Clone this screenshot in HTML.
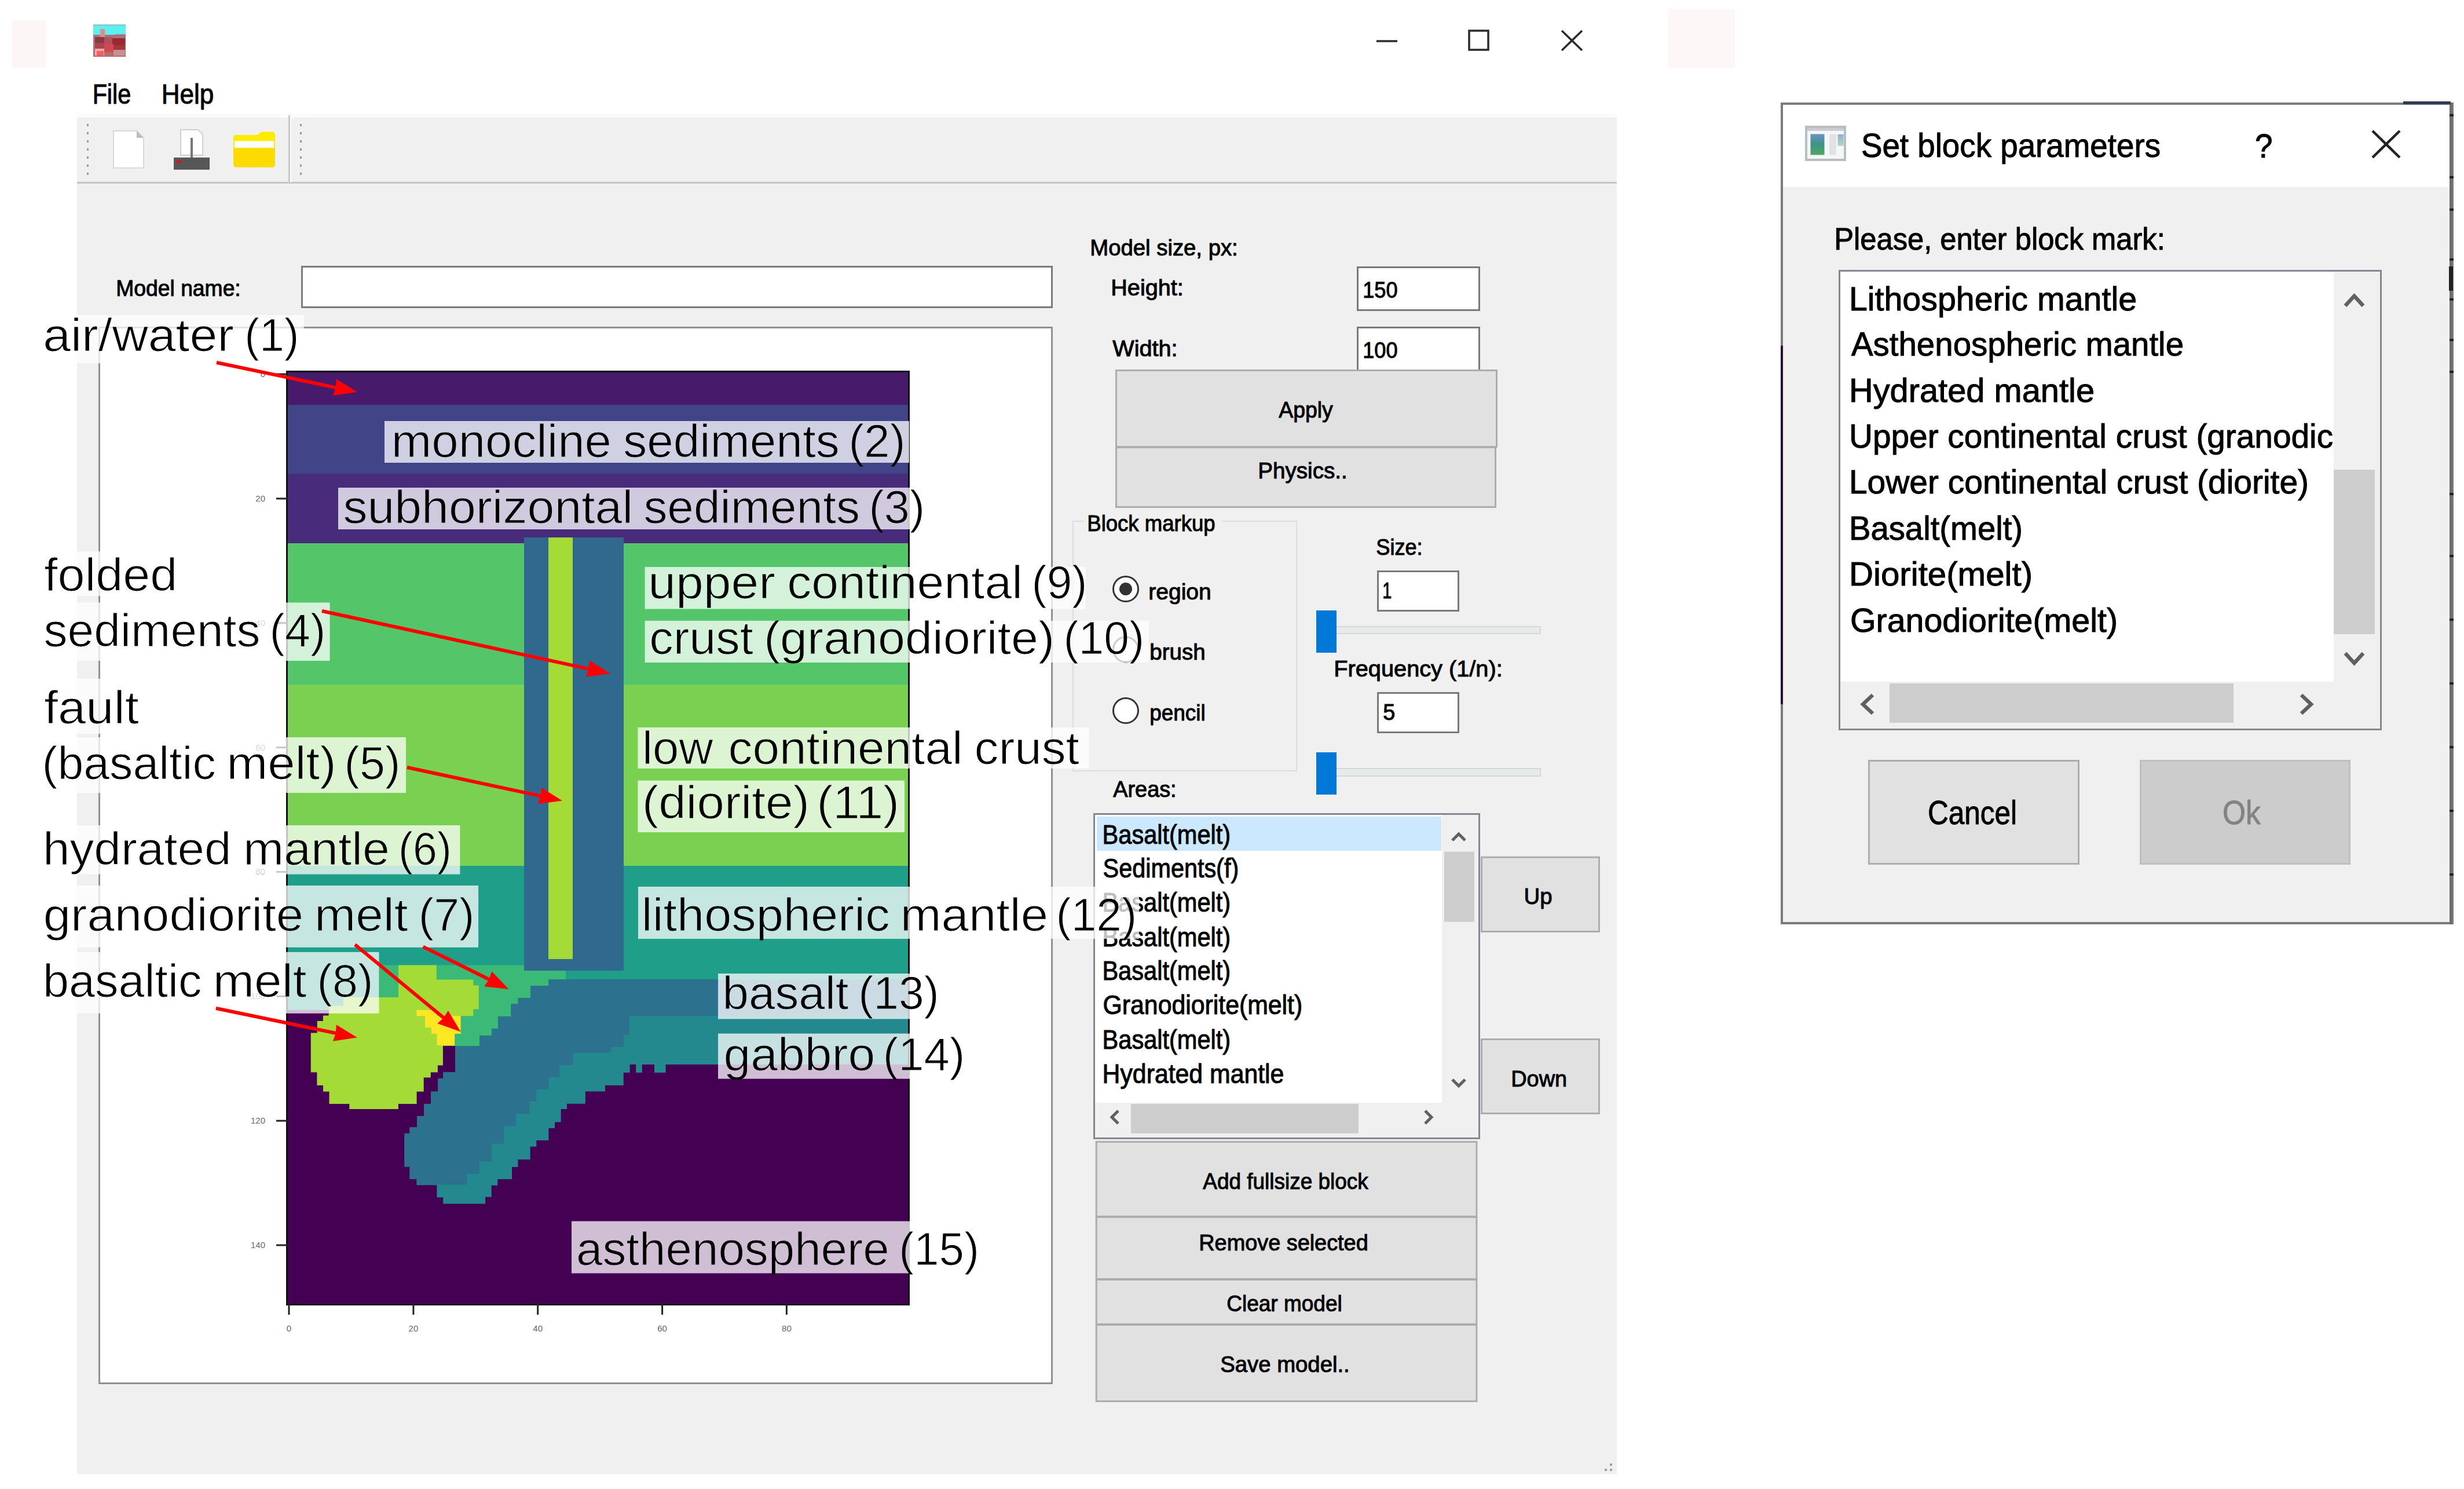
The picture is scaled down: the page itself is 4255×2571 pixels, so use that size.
<!DOCTYPE html><html><head><meta charset="utf-8"><title>GeoModel</title><style>
html,body{margin:0;padding:0;background:#fff;overflow:hidden;width:4255px;height:2571px}
svg{display:block;font-family:"Liberation Sans",sans-serif}
</style></head><body>
<svg width="4255" height="2571" viewBox="0 0 4255 2571">
<rect x="0" y="0" width="4255" height="2571" fill="#ffffff"/>
<rect x="21" y="35" width="58" height="82" fill="#fdf6f6"/>
<rect x="2881" y="15" width="115" height="103" fill="#fdf7f7"/>
<g>
<rect x="161" y="42" width="56" height="56" fill="#b86a72"/>
<rect x="161" y="42" width="56" height="18" fill="#5ef0ee"/>
<rect x="161" y="42" width="56" height="3" fill="#86d0d0"/>
<rect x="199" y="59" width="18" height="4" fill="#8a86dc"/>
<rect x="161" y="60" width="56" height="5" fill="#a8707a"/>
<rect x="173" y="50" width="8" height="15" fill="#e08a8a"/>
<rect x="164" y="64" width="16" height="10" fill="#8a3844"/>
<rect x="180" y="64" width="14" height="12" fill="#b05060"/>
<rect x="194" y="66" width="22" height="12" fill="#9a2830"/>
<rect x="164" y="74" width="16" height="10" fill="#a84450"/>
<rect x="180" y="76" width="16" height="14" fill="#d04850"/>
<rect x="196" y="78" width="20" height="8" fill="#a03838"/>
<rect x="164" y="84" width="16" height="12" fill="#f0a8a8"/>
<rect x="167" y="88" width="12" height="8" fill="#f06060"/>
<rect x="196" y="86" width="20" height="10" fill="#c89090"/>
<rect x="180" y="90" width="16" height="6" fill="#b07070"/>
</g>
<g stroke="#2b2b2b" stroke-width="3.5" fill="none">
<line x1="2377" y1="71" x2="2413" y2="71"/>
<rect x="2537" y="53" width="33" height="33"/>
<line x1="2697" y1="53" x2="2732" y2="87"/><line x1="2732" y1="53" x2="2697" y2="87"/>
</g>
<text x="159.64" y="179" font-size="48" fill="#000" textLength="66.57" lengthAdjust="spacingAndGlyphs" stroke="#000" stroke-width="1.0">File</text>
<text x="278.64" y="179" font-size="48" fill="#000" textLength="90.61" lengthAdjust="spacingAndGlyphs" stroke="#000" stroke-width="1.0">Help</text>
<rect x="133" y="196" width="2659" height="2349" fill="#f0f0f0"/>
<rect x="133" y="196" width="2659" height="7" fill="#fbfbfb"/>
<rect x="133" y="314" width="2659" height="3" fill="#c4c4c4"/>
<rect x="498" y="199" width="3" height="116" fill="#c8c8c8"/>
<rect x="501" y="199" width="2" height="116" fill="#ffffff"/>
<rect x="150" y="214" width="3" height="4" fill="#9a9a9a"/>
<rect x="150" y="228" width="3" height="4" fill="#9a9a9a"/>
<rect x="150" y="242" width="3" height="4" fill="#9a9a9a"/>
<rect x="150" y="256" width="3" height="4" fill="#9a9a9a"/>
<rect x="150" y="270" width="3" height="4" fill="#9a9a9a"/>
<rect x="150" y="284" width="3" height="4" fill="#9a9a9a"/>
<rect x="150" y="298" width="3" height="4" fill="#9a9a9a"/>
<rect x="518" y="214" width="3" height="4" fill="#9a9a9a"/>
<rect x="518" y="228" width="3" height="4" fill="#9a9a9a"/>
<rect x="518" y="242" width="3" height="4" fill="#9a9a9a"/>
<rect x="518" y="256" width="3" height="4" fill="#9a9a9a"/>
<rect x="518" y="270" width="3" height="4" fill="#9a9a9a"/>
<rect x="518" y="284" width="3" height="4" fill="#9a9a9a"/>
<rect x="518" y="298" width="3" height="4" fill="#9a9a9a"/>
<path d="M196 226 H236 L248 238 V290 H196 Z" fill="#ffffff" stroke="#d9d9d9" stroke-width="2"/>
<path d="M236 226 V238 H248 Z" fill="#bdbdbd"/>
<path d="M312 224 H342 L350 232 V268 H312 Z" fill="#ffffff" stroke="#d0d0d0" stroke-width="2"/>
<rect x="329" y="238" width="4" height="42" fill="#777777"/>
<rect x="300" y="272" width="62" height="21" fill="#575757"/>
<rect x="305" y="277" width="8" height="4" fill="#e01010"/>
<path d="M403 238 Q403 233 408 233 H445 L449 229 Q451 227.5 454 227.5 H470 Q475 227.5 475 233 V283 Q475 289 469 289 H409 Q403 289 403 283 Z" fill="#fdec00"/>
<rect x="405" y="243.5" width="68" height="12" fill="#ffffff"/>
<path d="M403 255.5 H475 V283 Q475 289 469 289 H409 Q403 289 403 283 Z" fill="#fcdc00"/>
<text x="200.27" y="511" font-size="39" fill="#000" textLength="215.46" lengthAdjust="spacingAndGlyphs" stroke="#000" stroke-width="1.0">Model name:</text>
<rect x="521.5" y="460.5" width="1295" height="70" fill="#ffffff" stroke="#7a7a7a" stroke-width="3"/>
<rect x="171.5" y="565.5" width="1645" height="1823" fill="#ffffff" stroke="#8d9299" stroke-width="3"/>
<rect x="497" y="643" width="1071" height="1608" fill="#440154"/>
<rect x="497" y="643" width="1071" height="57" fill="#481a6c"/>
<rect x="497" y="699" width="1071" height="119" fill="#414487"/>
<rect x="497" y="818" width="1071" height="120" fill="#482c7b"/>
<rect x="497" y="938" width="1071" height="244" fill="#54c568"/>
<rect x="497" y="1182" width="1071" height="313" fill="#7ad151"/>
<rect x="497" y="1495" width="1071" height="196" fill="#1f9e89"/>
<rect x="497" y="1690" width="160" height="54" fill="#1f9e89"/>
<polygon points="655.0,1666.5 905.0,1666.5 905.0,1676.0 977.0,1676.0 977.0,1691.0 947.7,1691.0 947.7,1702.0 916.0,1702.0 916.0,1723.0 894.8,1723.0 894.8,1733.7 882.7,1733.7 882.7,1755.0 860.0,1755.0 860.0,1776.0 849.5,1776.0 849.5,1788.0 828.0,1788.0 828.0,1806.0 655.0,1806.0" fill="#3bb977"/>
<polygon points="786.0,1806.0 786.0,1851.5 765.0,1851.5 765.0,1862.0 756.0,1862.0 756.0,1884.7 744.0,1884.7 744.0,1906.0 732.0,1906.0 732.0,1927.0 720.0,1927.0 720.0,1946.6 707.5,1946.6 707.5,1957.2 698.5,1957.2 698.5,2014.6 707.5,2014.6 707.5,2035.8 719.6,2035.8 719.6,2046.3 754.4,2046.3 754.4,2067.5 765.3,2067.5 765.3,2078.4 838.0,2078.4 838.0,2066.7 848.7,2066.7 848.7,2046.7 859.3,2046.7 859.3,2036.0 884.0,2036.0 884.0,2015.0 894.5,2015.0 894.5,2002.0 915.7,2002.0 915.7,1979.7 926.3,1979.7 926.3,1969.0 947.4,1969.0 947.4,1948.0 958.0,1948.0 958.0,1937.4 968.6,1937.4 968.6,1915.0 979.0,1915.0 979.0,1905.7 1010.9,1905.7 1010.9,1884.5 1045.0,1884.5 1045.0,1874.0 1076.7,1874.0 1076.7,1852.0 1087.6,1852.0 1087.6,1838.0 1098.2,1838.0 1098.2,1852.0 1108.8,1852.0 1108.8,1838.0 1130.0,1838.0 1130.0,1852.0 1149.5,1852.0 1149.5,1838.0 1568.0,1838.0 1568.0,1691.0 947.7,1691.0 947.7,1702.0 916.0,1702.0 916.0,1723.0 894.8,1723.0 894.8,1733.7 882.7,1733.7 882.7,1755.0 860.0,1755.0 860.0,1776.0 849.5,1776.0 849.5,1788.0 828.0,1788.0 828.0,1806.0" fill="#23898e"/>
<polygon points="786.0,1806.0 786.0,1851.5 765.0,1851.5 765.0,1862.0 756.0,1862.0 756.0,1884.7 744.0,1884.7 744.0,1906.0 732.0,1906.0 732.0,1927.0 720.0,1927.0 720.0,1946.6 707.5,1946.6 707.5,1957.2 698.5,1957.2 698.5,2014.6 707.5,2014.6 707.5,2035.8 719.6,2035.8 719.6,2045.5 806.4,2045.5 806.4,2026.7 827.6,2026.7 827.6,2005.6 848.7,2005.6 848.7,1975.0 869.9,1975.0 869.9,1944.5 891.0,1944.5 891.0,1923.0 914.5,1923.0 914.5,1902.0 926.3,1902.0 926.3,1881.0 947.4,1881.0 947.4,1860.0 966.2,1860.0 966.2,1838.7 989.7,1838.7 989.7,1817.6 1055.5,1817.6 1055.5,1808.0 1077.0,1808.0 1077.0,1787.0 1087.0,1787.0 1087.0,1754.0 1568.0,1754.0 1568.0,1691.0 947.7,1691.0 947.7,1702.0 916.0,1702.0 916.0,1723.0 894.8,1723.0 894.8,1733.7 882.7,1733.7 882.7,1755.0 860.0,1755.0 860.0,1776.0 849.5,1776.0 849.5,1788.0 828.0,1788.0 828.0,1806.0" fill="#2c728e"/>
<polygon points="688.0,1666.5 753.7,1666.5 753.7,1691.4 817.3,1691.4 817.3,1701.6 826.8,1701.6 826.8,1742.5 817.3,1742.5 817.3,1754.2 795.4,1754.2 795.4,1785.0 785.1,1785.0 785.1,1805.3 764.9,1805.3 764.9,1839.4 755.9,1839.4 755.9,1851.5 743.8,1851.5 743.8,1860.5 731.7,1860.5 731.7,1884.7 719.6,1884.7 719.6,1905.9 687.9,1905.9 687.9,1914.9 603.3,1914.9 603.3,1905.9 568.5,1905.9 568.5,1884.7 558.0,1884.7 558.0,1874.1 547.4,1874.1 547.4,1851.5 536.8,1851.5 536.8,1783.4 547.7,1783.4 547.7,1763.0 557.9,1763.0 557.9,1753.5 567.4,1753.5 568.9,1736.7 593.0,1736.7 593.0,1722.0 688.0,1722.0" fill="#a5db36"/>
<polygon points="719.4,1744.0 753.7,1744.0 753.7,1754.2 795.4,1754.2 795.4,1785.0 785.1,1785.0 785.1,1805.3 754.5,1805.3 754.5,1785.0 745.0,1785.0 745.0,1774.0 734.0,1774.0 734.0,1754.2 719.4,1754.2" fill="#fde725"/>
<rect x="905" y="928" width="172" height="748" fill="#31688e"/>
<rect x="947" y="928" width="42" height="728" fill="#a5db36"/>
<rect x="495.5" y="641.5" width="1074" height="1611" fill="none" stroke="#111" stroke-width="3"/>
<g stroke="#222" stroke-width="3">
<line x1="477" y1="646.0" x2="497" y2="646.0"/>
<line x1="477" y1="860.9" x2="497" y2="860.9"/>
<line x1="477" y1="1075.7" x2="497" y2="1075.7"/>
<line x1="477" y1="1290.6" x2="497" y2="1290.6"/>
<line x1="477" y1="1505.4" x2="497" y2="1505.4"/>
<line x1="477" y1="1720.3" x2="497" y2="1720.3"/>
<line x1="477" y1="1935.2" x2="497" y2="1935.2"/>
<line x1="477" y1="2150.0" x2="497" y2="2150.0"/>
<line x1="499.0" y1="2251" x2="499.0" y2="2270"/>
<line x1="713.9" y1="2251" x2="713.9" y2="2270"/>
<line x1="928.7" y1="2251" x2="928.7" y2="2270"/>
<line x1="1143.6" y1="2251" x2="1143.6" y2="2270"/>
<line x1="1358.4" y1="2251" x2="1358.4" y2="2270"/>
</g>
<text x="458" y="651.0" font-size="15" fill="#666" text-anchor="end">0</text>
<text x="458" y="865.9" font-size="15" fill="#666" text-anchor="end">20</text>
<text x="458" y="1080.7" font-size="15" fill="#666" text-anchor="end">40</text>
<text x="458" y="1295.6" font-size="15" fill="#666" text-anchor="end">60</text>
<text x="458" y="1510.4" font-size="15" fill="#666" text-anchor="end">80</text>
<text x="458" y="1725.3" font-size="15" fill="#666" text-anchor="end">100</text>
<text x="458" y="1940.2" font-size="15" fill="#666" text-anchor="end">120</text>
<text x="458" y="2155.0" font-size="15" fill="#666" text-anchor="end">140</text>
<text x="499.0" y="2299" font-size="15" fill="#666" text-anchor="middle">0</text>
<text x="713.9" y="2299" font-size="15" fill="#666" text-anchor="middle">20</text>
<text x="928.7" y="2299" font-size="15" fill="#666" text-anchor="middle">40</text>
<text x="1143.6" y="2299" font-size="15" fill="#666" text-anchor="middle">60</text>
<text x="1358.4" y="2299" font-size="15" fill="#666" text-anchor="middle">80</text>
<text x="1882.27" y="441" font-size="39" fill="#000" textLength="255.46" lengthAdjust="spacingAndGlyphs" stroke="#000" stroke-width="1.0">Model size, px:</text>
<text x="1918.27" y="510" font-size="39" fill="#000" textLength="125.47" lengthAdjust="spacingAndGlyphs" stroke="#000" stroke-width="1.0">Height:</text>
<rect x="2344.5" y="461.5" width="210" height="74" fill="#ffffff" stroke="#7a7a7a" stroke-width="3"/>
<text x="2353.27" y="514" font-size="39" fill="#000" textLength="60.32" lengthAdjust="spacingAndGlyphs" stroke="#000" stroke-width="1.0">150</text>
<text x="1921.27" y="615.4" font-size="39" fill="#000" textLength="112.38" lengthAdjust="spacingAndGlyphs" stroke="#000" stroke-width="1.0">Width:</text>
<rect x="2344.5" y="565.5" width="210" height="93" fill="#ffffff" stroke="#7a7a7a" stroke-width="3"/>
<text x="2353.27" y="618" font-size="39" fill="#000" textLength="60.32" lengthAdjust="spacingAndGlyphs" stroke="#000" stroke-width="1.0">100</text>
<rect x="1927.5" y="639.5" width="657" height="132" fill="#e1e1e1" stroke="#adadad" stroke-width="3"/>
<text x="2208.27" y="720.5" font-size="39" fill="#000" textLength="93.49" lengthAdjust="spacingAndGlyphs" stroke="#000" stroke-width="1.0">Apply</text>
<rect x="1927.5" y="772.5" width="655" height="103" fill="#e1e1e1" stroke="#adadad" stroke-width="3"/>
<text x="2172.27" y="825.6" font-size="39" fill="#000" textLength="154.52" lengthAdjust="spacingAndGlyphs" stroke="#000" stroke-width="1.0">Physics..</text>
<rect x="1853.0" y="900.0" width="386" height="431" fill="none" stroke="#dcdcdc" stroke-width="2"/>
<rect x="1872" y="885" width="238" height="30" fill="#f0f0f0"/>
<text x="1877.27" y="917" font-size="39" fill="#000" textLength="221.42" lengthAdjust="spacingAndGlyphs" stroke="#000" stroke-width="1.0">Block markup</text>
<circle cx="1944" cy="1017" r="21.5" fill="#ffffff" stroke="#333333" stroke-width="3"/>
<circle cx="1944" cy="1017" r="11" fill="#333333"/>
<circle cx="1944" cy="1121.6" r="21.5" fill="#ffffff" stroke="#333333" stroke-width="3"/>
<circle cx="1944" cy="1227" r="21.5" fill="#ffffff" stroke="#333333" stroke-width="3"/>
<text x="1983.27" y="1035" font-size="39" fill="#000" textLength="108.42" lengthAdjust="spacingAndGlyphs" stroke="#000" stroke-width="1.0">region</text>
<text x="1985.27" y="1139" font-size="39" fill="#000" textLength="96.39" lengthAdjust="spacingAndGlyphs" stroke="#000" stroke-width="1.0">brush</text>
<text x="1985.27" y="1243.7" font-size="39" fill="#000" textLength="96.39" lengthAdjust="spacingAndGlyphs" stroke="#000" stroke-width="1.0">pencil</text>
<text x="2376.27" y="958" font-size="39" fill="#000" textLength="80.36" lengthAdjust="spacingAndGlyphs" stroke="#000" stroke-width="1.0">Size:</text>
<rect x="2379.5" y="986.5" width="139" height="68" fill="#ffffff" stroke="#7a7a7a" stroke-width="3"/>
<text x="2387.27" y="1033" font-size="39" fill="#000" textLength="16.09" lengthAdjust="spacingAndGlyphs" stroke="#000" stroke-width="1.0">1</text>
<rect x="2306.0" y="1082.0" width="354" height="12" fill="#e7eaea" stroke="#d6d6d6" stroke-width="2"/>
<rect x="2273" y="1054" width="35" height="73" fill="#0078d7"/>
<text x="2303.27" y="1168" font-size="39" fill="#000" textLength="291.46" lengthAdjust="spacingAndGlyphs" stroke="#000" stroke-width="1.0">Frequency (1/n):</text>
<rect x="2379.5" y="1196.5" width="139" height="68" fill="#ffffff" stroke="#7a7a7a" stroke-width="3"/>
<text x="2388.27" y="1243" font-size="39" fill="#000" textLength="21.02" lengthAdjust="spacingAndGlyphs" stroke="#000" stroke-width="1.0">5</text>
<rect x="2306.0" y="1327.0" width="354" height="13" fill="#e7eaea" stroke="#d6d6d6" stroke-width="2"/>
<rect x="2273" y="1299" width="35" height="73" fill="#0078d7"/>
<text x="1922.27" y="1375.5" font-size="39" fill="#000" textLength="109.37" lengthAdjust="spacingAndGlyphs" stroke="#000" stroke-width="1.0">Areas:</text>
<rect x="1889.5" y="1405.5" width="665" height="560" fill="#f0f0f0" stroke="#828790" stroke-width="3"/>
<rect x="1891" y="1407" width="599" height="497" fill="#ffffff"/>
<rect x="1894" y="1410" width="595" height="59" fill="#cce8ff"/>
<text x="1903.58" y="1456.5" font-size="46" fill="#000000" textLength="221.61" lengthAdjust="spacingAndGlyphs" stroke="#000000" stroke-width="1.0">Basalt(melt)</text>
<text x="1904.58" y="1515" font-size="46" fill="#000000" textLength="234.6" lengthAdjust="spacingAndGlyphs" stroke="#000000" stroke-width="1.0">Sediments(f)</text>
<text x="1903.38" y="1573.5" font-size="46" fill="#000000" textLength="221.82" lengthAdjust="spacingAndGlyphs" stroke="#000000" stroke-width="1.0">Basalt(melt)</text>
<text x="1903.38" y="1633.5" font-size="46" fill="#000000" textLength="221.82" lengthAdjust="spacingAndGlyphs" stroke="#000000" stroke-width="1.0">Basalt(melt)</text>
<text x="1903.38" y="1692" font-size="46" fill="#000000" textLength="221.82" lengthAdjust="spacingAndGlyphs" stroke="#000000" stroke-width="1.0">Basalt(melt)</text>
<text x="1904.58" y="1750.7" font-size="46" fill="#000000" textLength="344.62" lengthAdjust="spacingAndGlyphs" stroke="#000000" stroke-width="1.0">Granodiorite(melt)</text>
<text x="1903.58" y="1811" font-size="46" fill="#000000" textLength="221.61" lengthAdjust="spacingAndGlyphs" stroke="#000000" stroke-width="1.0">Basalt(melt)</text>
<text x="1903.58" y="1869.5" font-size="46" fill="#000000" textLength="313.8" lengthAdjust="spacingAndGlyphs" stroke="#000000" stroke-width="1.0">Hydrated mantle</text>
<rect x="2494" y="1470.6" width="52" height="121" fill="#cdcdcd"/>
<path d="M2508 1451 L2519 1440 L2530 1451" fill="none" stroke="#606060" stroke-width="5"/>
<path d="M2508 1864 L2519 1875 L2530 1864" fill="none" stroke="#606060" stroke-width="5"/>
<rect x="1953" y="1906" width="393" height="51" fill="#cdcdcd"/>
<path d="M1931 1918 L1920 1929 L1931 1940" fill="none" stroke="#606060" stroke-width="5"/>
<path d="M2461 1918 L2472 1929 L2461 1940" fill="none" stroke="#606060" stroke-width="5"/>
<rect x="2558.5" y="1480.2" width="203" height="128.3" fill="#e1e1e1" stroke="#adadad" stroke-width="3"/>
<text x="2631.47" y="1561" font-size="39" fill="#000" textLength="49.09" lengthAdjust="spacingAndGlyphs" stroke="#000" stroke-width="1.0">Up</text>
<rect x="2558.5" y="1794.5" width="203" height="128" fill="#e1e1e1" stroke="#adadad" stroke-width="3"/>
<text x="2609.27" y="1875.6" font-size="39" fill="#000" textLength="96.81" lengthAdjust="spacingAndGlyphs" stroke="#000" stroke-width="1.0">Down</text>
<rect x="1893.2" y="1971.5" width="656.7" height="129" fill="#e1e1e1" stroke="#adadad" stroke-width="3"/>
<rect x="1893.2" y="2101.5" width="656.7" height="107" fill="#e1e1e1" stroke="#adadad" stroke-width="3"/>
<rect x="1893.2" y="2209.5" width="656.7" height="77" fill="#e1e1e1" stroke="#adadad" stroke-width="3"/>
<rect x="1893.2" y="2287.5" width="656.7" height="132" fill="#e1e1e1" stroke="#adadad" stroke-width="3"/>
<text x="2077.27" y="2053.4" font-size="39" fill="#000" textLength="285.47" lengthAdjust="spacingAndGlyphs" stroke="#000" stroke-width="1.0">Add fullsize block</text>
<text x="2070.27" y="2158.5" font-size="39" fill="#000" textLength="292.44" lengthAdjust="spacingAndGlyphs" stroke="#000" stroke-width="1.0">Remove selected</text>
<text x="2118.27" y="2263.6" font-size="39" fill="#000" textLength="199.45" lengthAdjust="spacingAndGlyphs" stroke="#000" stroke-width="1.0">Clear model</text>
<text x="2107.27" y="2369" font-size="39" fill="#000" textLength="223.45" lengthAdjust="spacingAndGlyphs" stroke="#000" stroke-width="1.0">Save model..</text>
<rect x="2780" y="2527" width="4" height="4" fill="#a0a0a0"/>
<rect x="2780" y="2536" width="4" height="4" fill="#a0a0a0"/>
<rect x="2771" y="2536" width="4" height="4" fill="#a0a0a0"/>
<rect x="3075" y="177" width="1162" height="1419" fill="#7c7c7c"/>
<rect x="3079" y="181" width="1152" height="142" fill="#ffffff"/>
<rect x="3079" y="323" width="1152" height="1269" fill="#f0f0f0"/>
<rect x="3075" y="597" width="4" height="619" fill="#2a0c34"/>
<rect x="4230" y="177" width="5" height="1419" fill="#6e6e6e"/>
<rect x="4230" y="197" width="7" height="4" fill="#222222"/>
<rect x="4230" y="304" width="7" height="4" fill="#222222"/>
<rect x="4230" y="360" width="7" height="4" fill="#222222"/>
<rect x="4230" y="446" width="7" height="4" fill="#222222"/>
<rect x="4230" y="515" width="7" height="4" fill="#222222"/>
<rect x="4230" y="585" width="7" height="4" fill="#222222"/>
<rect x="4230" y="640" width="7" height="4" fill="#222222"/>
<rect x="4230" y="851" width="7" height="4" fill="#222222"/>
<rect x="4230" y="958" width="7" height="4" fill="#222222"/>
<rect x="4230" y="1068" width="7" height="4" fill="#222222"/>
<rect x="4230" y="1178" width="7" height="4" fill="#222222"/>
<rect x="4230" y="1288" width="7" height="4" fill="#222222"/>
<rect x="4230" y="1398" width="7" height="4" fill="#222222"/>
<rect x="4230" y="1508" width="7" height="4" fill="#222222"/>
<rect x="4229" y="460" width="7" height="42" fill="#222222"/>
<rect x="4150" y="175" width="82" height="5" fill="#333a55"/>
<rect x="3119.0" y="219.0" width="67" height="57" fill="#f4f6f8" stroke="#b9bdc3" stroke-width="4"/>
<rect x="3121" y="221" width="63" height="5" fill="#c9cdd2"/>
<defs><linearGradient id="gi" x1="0" y1="0" x2="0" y2="1"><stop offset="0" stop-color="#6a92c0"/><stop offset="0.5" stop-color="#3c9488"/><stop offset="1" stop-color="#4caa5c"/></linearGradient></defs>
<rect x="3126.5" y="231.5" width="24" height="36" fill="url(#gi)"/>
<rect x="3159" y="231.5" width="12" height="36" fill="#e2e2e2"/>
<defs><linearGradient id="gj" x1="0" y1="0" x2="0" y2="1"><stop offset="0" stop-color="#8ab0d8"/><stop offset="1" stop-color="#b0dcb0"/></linearGradient></defs>
<rect x="3173.5" y="232" width="10" height="20" fill="url(#gj)"/>
<text x="3213.94" y="271" font-size="58" fill="#000" textLength="517.08" lengthAdjust="spacingAndGlyphs" stroke="#000" stroke-width="1.0">Set block parameters</text>
<text x="3893.94" y="272" font-size="58" fill="#000" textLength="30.48" lengthAdjust="spacingAndGlyphs" stroke="#000" stroke-width="1.0">?</text>
<g stroke="#222" stroke-width="4.5"><line x1="4097" y1="226" x2="4144" y2="272"/><line x1="4144" y1="226" x2="4097" y2="272"/></g>
<text x="3167.29" y="431.2" font-size="53" fill="#000" textLength="571.42" lengthAdjust="spacingAndGlyphs" stroke="#000" stroke-width="1.0">Please, enter block mark:</text>
<rect x="3176.5" y="467.5" width="935" height="792" fill="#f0f0f0" stroke="#828790" stroke-width="3"/>
<rect x="3178" y="469" width="852" height="708" fill="#ffffff"/>
<defs><clipPath id="dl"><rect x="3178" y="469" width="852" height="708"/></clipPath></defs>
<g clip-path="url(#dl)">
<text x="3192.94" y="535.6" font-size="58" fill="#000" textLength="497.09" lengthAdjust="spacingAndGlyphs" stroke="#000" stroke-width="1.0">Lithospheric mantle</text>
<text x="3196.94" y="614.3" font-size="58" fill="#000" textLength="574.1" lengthAdjust="spacingAndGlyphs" stroke="#000" stroke-width="1.0">Asthenospheric mantle</text>
<text x="3192.94" y="693.5" font-size="58" fill="#000" textLength="424.09" lengthAdjust="spacingAndGlyphs" stroke="#000" stroke-width="1.0">Hydrated mantle</text>
<text x="3192.94" y="773" font-size="58" fill="#000" textLength="836.1" lengthAdjust="spacingAndGlyphs" stroke="#000" stroke-width="1.0">Upper continental crust (granodic</text>
<text x="3192.94" y="852.3" font-size="58" fill="#000" textLength="794.11" lengthAdjust="spacingAndGlyphs" stroke="#000" stroke-width="1.0">Lower continental crust (diorite)</text>
<text x="3192.94" y="931.8" font-size="58" fill="#000" textLength="300.1" lengthAdjust="spacingAndGlyphs" stroke="#000" stroke-width="1.0">Basalt(melt)</text>
<text x="3192.94" y="1011.2" font-size="58" fill="#000" textLength="317.1" lengthAdjust="spacingAndGlyphs" stroke="#000" stroke-width="1.0">Diorite(melt)</text>
<text x="3194.94" y="1090.8" font-size="58" fill="#000" textLength="462.08" lengthAdjust="spacingAndGlyphs" stroke="#000" stroke-width="1.0">Granodiorite(melt)</text>
</g>
<rect x="4030" y="811" width="71" height="284" fill="#cdcdcd"/>
<path d="M4050 528 L4065.5 511 L4081 528" fill="none" stroke="#606060" stroke-width="6.5"/>
<path d="M4050 1128 L4065.5 1145 L4081 1128" fill="none" stroke="#606060" stroke-width="6.5"/>
<rect x="3263" y="1180" width="594" height="68" fill="#cdcdcd"/>
<path d="M3234 1200 L3217 1216 L3234 1232" fill="none" stroke="#606060" stroke-width="6.5"/>
<path d="M3974 1200 L3991 1216 L3974 1232" fill="none" stroke="#606060" stroke-width="6.5"/>
<rect x="3227.5" y="1313.5" width="362" height="178" fill="#e1e1e1" stroke="#adadad" stroke-width="3"/>
<text x="3328.94" y="1423" font-size="58" fill="#000" textLength="154.02" lengthAdjust="spacingAndGlyphs" stroke="#000" stroke-width="1.0">Cancel</text>
<rect x="3696.5" y="1313.5" width="361" height="178" fill="#cccccc" stroke="#bfbfbf" stroke-width="3"/>
<text x="3837.94" y="1423" font-size="58" fill="#838383" textLength="65.68" lengthAdjust="spacingAndGlyphs" stroke="#838383" stroke-width="1.0">Ok</text>
<rect x="60" y="544" width="464.7" height="83.3" fill="rgba(255,255,255,0.75)"/>
<rect x="664" y="727" width="906" height="72" fill="rgba(255,255,255,0.75)"/>
<rect x="584" y="842" width="1016" height="72" fill="rgba(255,255,255,0.75)"/>
<rect x="60" y="952" width="420" height="77" fill="rgba(255,255,255,0.75)"/>
<rect x="60" y="1040.4" width="509.6" height="100.5" fill="rgba(255,255,255,0.75)"/>
<rect x="60" y="1172" width="420" height="95" fill="rgba(255,255,255,0.75)"/>
<rect x="60" y="1273" width="641" height="96" fill="rgba(255,255,255,0.75)"/>
<rect x="60" y="1425" width="734.4" height="84.6" fill="rgba(255,255,255,0.75)"/>
<rect x="60" y="1529" width="766" height="106.8" fill="rgba(255,255,255,0.75)"/>
<rect x="60" y="1643.9" width="594.5" height="105.9" fill="rgba(255,255,255,0.75)"/>
<rect x="1113.6" y="979" width="761.0" height="72.5" fill="rgba(255,255,255,0.75)"/>
<rect x="1113.6" y="1071.8" width="870.4" height="72.2" fill="rgba(255,255,255,0.75)"/>
<rect x="1101.5" y="1256" width="779.2" height="71" fill="rgba(255,255,255,0.75)"/>
<rect x="1101.5" y="1347.7" width="460.5" height="89.3" fill="rgba(255,255,255,0.75)"/>
<rect x="1102" y="1531" width="865" height="90" fill="rgba(255,255,255,0.75)"/>
<rect x="1240" y="1681" width="379" height="78.5" fill="rgba(255,255,255,0.75)"/>
<rect x="1240" y="1784.6" width="422" height="78.1" fill="rgba(255,255,255,0.75)"/>
<rect x="987" y="2108.6" width="713" height="89.9" fill="rgba(255,255,255,0.75)"/>
<mask id="lm" maskUnits="userSpaceOnUse" x="0" y="0" width="4255" height="2571"><text x="74.2" y="606" font-size="80" fill="#fff" stroke="#000" stroke-width="1.2" textLength="329.71" lengthAdjust="spacingAndGlyphs">air/water</text><text x="422.2" y="606" font-size="80" fill="#fff" stroke="#000" stroke-width="1.2" textLength="94.31" lengthAdjust="spacingAndGlyphs">(1)</text><text x="675.8" y="789" font-size="80" fill="#fff" stroke="#000" stroke-width="1.2" textLength="380.17" lengthAdjust="spacingAndGlyphs">monocline</text><text x="1076.2" y="789" font-size="80" fill="#fff" stroke="#000" stroke-width="1.2" textLength="373.51" lengthAdjust="spacingAndGlyphs">sediments</text><text x="1465.4" y="789" font-size="80" fill="#fff" stroke="#000" stroke-width="1.2" textLength="98.0" lengthAdjust="spacingAndGlyphs">(2)</text><text x="592.4" y="903" font-size="80" fill="#fff" stroke="#000" stroke-width="1.2" textLength="500.75" lengthAdjust="spacingAndGlyphs">subhorizontal</text><text x="1111.4" y="903" font-size="80" fill="#fff" stroke="#000" stroke-width="1.2" textLength="373.51" lengthAdjust="spacingAndGlyphs">sediments</text><text x="1500.6" y="903" font-size="80" fill="#fff" stroke="#000" stroke-width="1.2" textLength="96.45" lengthAdjust="spacingAndGlyphs">(3)</text><text x="76.0" y="1020" font-size="80" fill="#fff" stroke="#000" stroke-width="1.2" textLength="230.27" lengthAdjust="spacingAndGlyphs">folded</text><text x="75.6" y="1115.5" font-size="80" fill="#fff" stroke="#000" stroke-width="1.2" textLength="373.92" lengthAdjust="spacingAndGlyphs">sediments</text><text x="465.6" y="1115.5" font-size="80" fill="#fff" stroke="#000" stroke-width="1.2" textLength="96.63" lengthAdjust="spacingAndGlyphs">(4)</text><text x="76.0" y="1248.5" font-size="80" fill="#fff" stroke="#000" stroke-width="1.2" textLength="163.71" lengthAdjust="spacingAndGlyphs">fault</text><text x="72.6" y="1345" font-size="80" fill="#fff" stroke="#000" stroke-width="1.2" textLength="300.12" lengthAdjust="spacingAndGlyphs">(basaltic</text><text x="391.2" y="1345" font-size="80" fill="#fff" stroke="#000" stroke-width="1.2" textLength="189.38" lengthAdjust="spacingAndGlyphs">melt)</text><text x="594.6" y="1345" font-size="80" fill="#fff" stroke="#000" stroke-width="1.2" textLength="96.66" lengthAdjust="spacingAndGlyphs">(5)</text><text x="74.0" y="1492.5" font-size="80" fill="#fff" stroke="#000" stroke-width="1.2" textLength="325.6" lengthAdjust="spacingAndGlyphs">hydrated</text><text x="420.0" y="1492.5" font-size="80" fill="#fff" stroke="#000" stroke-width="1.2" textLength="252.93" lengthAdjust="spacingAndGlyphs">mantle</text><text x="688.0" y="1492.5" font-size="80" fill="#fff" stroke="#000" stroke-width="1.2" textLength="91.84" lengthAdjust="spacingAndGlyphs">(6)</text><text x="74.8" y="1607" font-size="80" fill="#fff" stroke="#000" stroke-width="1.2" textLength="449.35" lengthAdjust="spacingAndGlyphs">granodiorite</text><text x="543.0" y="1607" font-size="80" fill="#fff" stroke="#000" stroke-width="1.2" textLength="161.63" lengthAdjust="spacingAndGlyphs">melt</text><text x="722.8" y="1607" font-size="80" fill="#fff" stroke="#000" stroke-width="1.2" textLength="96.64" lengthAdjust="spacingAndGlyphs">(7)</text><text x="74.0" y="1720.6" font-size="80" fill="#fff" stroke="#000" stroke-width="1.2" textLength="274.51" lengthAdjust="spacingAndGlyphs">basaltic</text><text x="367.8" y="1720.6" font-size="80" fill="#fff" stroke="#000" stroke-width="1.2" textLength="161.62" lengthAdjust="spacingAndGlyphs">melt</text><text x="547.6" y="1720.6" font-size="80" fill="#fff" stroke="#000" stroke-width="1.2" textLength="96.66" lengthAdjust="spacingAndGlyphs">(8)</text><text x="1119.2" y="1033" font-size="80" fill="#fff" stroke="#000" stroke-width="1.2" textLength="219.68" lengthAdjust="spacingAndGlyphs">upper</text><text x="1359.2" y="1033" font-size="80" fill="#fff" stroke="#000" stroke-width="1.2" textLength="406.75" lengthAdjust="spacingAndGlyphs">continental</text><text x="1781.6" y="1033" font-size="80" fill="#fff" stroke="#000" stroke-width="1.2" textLength="95.9" lengthAdjust="spacingAndGlyphs">(9)</text><text x="1121.2" y="1128.6" font-size="80" fill="#fff" stroke="#000" stroke-width="1.2" textLength="179.63" lengthAdjust="spacingAndGlyphs">crust</text><text x="1319.0" y="1128.6" font-size="80" fill="#fff" stroke="#000" stroke-width="1.2" textLength="501.99" lengthAdjust="spacingAndGlyphs">(granodiorite)</text><text x="1836.4" y="1128.6" font-size="80" fill="#fff" stroke="#000" stroke-width="1.2" textLength="139.73" lengthAdjust="spacingAndGlyphs">(10)</text><text x="1109.0" y="1319" font-size="80" fill="#fff" stroke="#000" stroke-width="1.2" textLength="122.33" lengthAdjust="spacingAndGlyphs">low</text><text x="1257.6" y="1319" font-size="80" fill="#fff" stroke="#000" stroke-width="1.2" textLength="404.95" lengthAdjust="spacingAndGlyphs">continental</text><text x="1682.6" y="1319" font-size="80" fill="#fff" stroke="#000" stroke-width="1.2" textLength="181.24" lengthAdjust="spacingAndGlyphs">crust</text><text x="1108.8" y="1412.6" font-size="80" fill="#fff" stroke="#000" stroke-width="1.2" textLength="288.99" lengthAdjust="spacingAndGlyphs">(diorite)</text><text x="1410.4" y="1412.6" font-size="80" fill="#fff" stroke="#000" stroke-width="1.2" textLength="142.6" lengthAdjust="spacingAndGlyphs">(11)</text><text x="1107.8" y="1607" font-size="80" fill="#fff" stroke="#000" stroke-width="1.2" textLength="428.75" lengthAdjust="spacingAndGlyphs">lithospheric</text><text x="1554.8" y="1607" font-size="80" fill="#fff" stroke="#000" stroke-width="1.2" textLength="255.16" lengthAdjust="spacingAndGlyphs">mantle</text><text x="1823.6" y="1607" font-size="80" fill="#fff" stroke="#000" stroke-width="1.2" textLength="139.5" lengthAdjust="spacingAndGlyphs">(12)</text><text x="1247.6" y="1742" font-size="80" fill="#fff" stroke="#000" stroke-width="1.2" textLength="217.86" lengthAdjust="spacingAndGlyphs">basalt</text><text x="1482.2" y="1742" font-size="80" fill="#fff" stroke="#000" stroke-width="1.2" textLength="139.49" lengthAdjust="spacingAndGlyphs">(13)</text><text x="1249.6" y="1847.6" font-size="80" fill="#fff" stroke="#000" stroke-width="1.2" textLength="261.5" lengthAdjust="spacingAndGlyphs">gabbro</text><text x="1524.8" y="1847.6" font-size="80" fill="#fff" stroke="#000" stroke-width="1.2" textLength="141.49" lengthAdjust="spacingAndGlyphs">(14)</text><text x="995.0" y="2184" font-size="80" fill="#fff" stroke="#000" stroke-width="1.2" textLength="540.75" lengthAdjust="spacingAndGlyphs">asthenosphere</text><text x="1552.2" y="2184" font-size="80" fill="#fff" stroke="#000" stroke-width="1.2" textLength="138.66" lengthAdjust="spacingAndGlyphs">(15)</text></mask>
<g mask="url(#lm)">
<text x="74.2" y="606" font-size="80" fill="#000" textLength="329.71" lengthAdjust="spacingAndGlyphs">air/water</text>
<text x="422.2" y="606" font-size="80" fill="#000" textLength="94.31" lengthAdjust="spacingAndGlyphs">(1)</text>
<text x="675.8" y="789" font-size="80" fill="#000" textLength="380.17" lengthAdjust="spacingAndGlyphs">monocline</text>
<text x="1076.2" y="789" font-size="80" fill="#000" textLength="373.51" lengthAdjust="spacingAndGlyphs">sediments</text>
<text x="1465.4" y="789" font-size="80" fill="#000" textLength="98.0" lengthAdjust="spacingAndGlyphs">(2)</text>
<text x="592.4" y="903" font-size="80" fill="#000" textLength="500.75" lengthAdjust="spacingAndGlyphs">subhorizontal</text>
<text x="1111.4" y="903" font-size="80" fill="#000" textLength="373.51" lengthAdjust="spacingAndGlyphs">sediments</text>
<text x="1500.6" y="903" font-size="80" fill="#000" textLength="96.45" lengthAdjust="spacingAndGlyphs">(3)</text>
<text x="76.0" y="1020" font-size="80" fill="#000" textLength="230.27" lengthAdjust="spacingAndGlyphs">folded</text>
<text x="75.6" y="1115.5" font-size="80" fill="#000" textLength="373.92" lengthAdjust="spacingAndGlyphs">sediments</text>
<text x="465.6" y="1115.5" font-size="80" fill="#000" textLength="96.63" lengthAdjust="spacingAndGlyphs">(4)</text>
<text x="76.0" y="1248.5" font-size="80" fill="#000" textLength="163.71" lengthAdjust="spacingAndGlyphs">fault</text>
<text x="72.6" y="1345" font-size="80" fill="#000" textLength="300.12" lengthAdjust="spacingAndGlyphs">(basaltic</text>
<text x="391.2" y="1345" font-size="80" fill="#000" textLength="189.38" lengthAdjust="spacingAndGlyphs">melt)</text>
<text x="594.6" y="1345" font-size="80" fill="#000" textLength="96.66" lengthAdjust="spacingAndGlyphs">(5)</text>
<text x="74.0" y="1492.5" font-size="80" fill="#000" textLength="325.6" lengthAdjust="spacingAndGlyphs">hydrated</text>
<text x="420.0" y="1492.5" font-size="80" fill="#000" textLength="252.93" lengthAdjust="spacingAndGlyphs">mantle</text>
<text x="688.0" y="1492.5" font-size="80" fill="#000" textLength="91.84" lengthAdjust="spacingAndGlyphs">(6)</text>
<text x="74.8" y="1607" font-size="80" fill="#000" textLength="449.35" lengthAdjust="spacingAndGlyphs">granodiorite</text>
<text x="543.0" y="1607" font-size="80" fill="#000" textLength="161.63" lengthAdjust="spacingAndGlyphs">melt</text>
<text x="722.8" y="1607" font-size="80" fill="#000" textLength="96.64" lengthAdjust="spacingAndGlyphs">(7)</text>
<text x="74.0" y="1720.6" font-size="80" fill="#000" textLength="274.51" lengthAdjust="spacingAndGlyphs">basaltic</text>
<text x="367.8" y="1720.6" font-size="80" fill="#000" textLength="161.62" lengthAdjust="spacingAndGlyphs">melt</text>
<text x="547.6" y="1720.6" font-size="80" fill="#000" textLength="96.66" lengthAdjust="spacingAndGlyphs">(8)</text>
<text x="1119.2" y="1033" font-size="80" fill="#000" textLength="219.68" lengthAdjust="spacingAndGlyphs">upper</text>
<text x="1359.2" y="1033" font-size="80" fill="#000" textLength="406.75" lengthAdjust="spacingAndGlyphs">continental</text>
<text x="1781.6" y="1033" font-size="80" fill="#000" textLength="95.9" lengthAdjust="spacingAndGlyphs">(9)</text>
<text x="1121.2" y="1128.6" font-size="80" fill="#000" textLength="179.63" lengthAdjust="spacingAndGlyphs">crust</text>
<text x="1319.0" y="1128.6" font-size="80" fill="#000" textLength="501.99" lengthAdjust="spacingAndGlyphs">(granodiorite)</text>
<text x="1836.4" y="1128.6" font-size="80" fill="#000" textLength="139.73" lengthAdjust="spacingAndGlyphs">(10)</text>
<text x="1109.0" y="1319" font-size="80" fill="#000" textLength="122.33" lengthAdjust="spacingAndGlyphs">low</text>
<text x="1257.6" y="1319" font-size="80" fill="#000" textLength="404.95" lengthAdjust="spacingAndGlyphs">continental</text>
<text x="1682.6" y="1319" font-size="80" fill="#000" textLength="181.24" lengthAdjust="spacingAndGlyphs">crust</text>
<text x="1108.8" y="1412.6" font-size="80" fill="#000" textLength="288.99" lengthAdjust="spacingAndGlyphs">(diorite)</text>
<text x="1410.4" y="1412.6" font-size="80" fill="#000" textLength="142.6" lengthAdjust="spacingAndGlyphs">(11)</text>
<text x="1107.8" y="1607" font-size="80" fill="#000" textLength="428.75" lengthAdjust="spacingAndGlyphs">lithospheric</text>
<text x="1554.8" y="1607" font-size="80" fill="#000" textLength="255.16" lengthAdjust="spacingAndGlyphs">mantle</text>
<text x="1823.6" y="1607" font-size="80" fill="#000" textLength="139.5" lengthAdjust="spacingAndGlyphs">(12)</text>
<text x="1247.6" y="1742" font-size="80" fill="#000" textLength="217.86" lengthAdjust="spacingAndGlyphs">basalt</text>
<text x="1482.2" y="1742" font-size="80" fill="#000" textLength="139.49" lengthAdjust="spacingAndGlyphs">(13)</text>
<text x="1249.6" y="1847.6" font-size="80" fill="#000" textLength="261.5" lengthAdjust="spacingAndGlyphs">gabbro</text>
<text x="1524.8" y="1847.6" font-size="80" fill="#000" textLength="141.49" lengthAdjust="spacingAndGlyphs">(14)</text>
<text x="995.0" y="2184" font-size="80" fill="#000" textLength="540.75" lengthAdjust="spacingAndGlyphs">asthenosphere</text>
<text x="1552.2" y="2184" font-size="80" fill="#000" textLength="138.66" lengthAdjust="spacingAndGlyphs">(15)</text>
</g>
<line x1="374" y1="626" x2="581.8" y2="669.6" stroke="#ff0000" stroke-width="6"/>
<polygon points="617.0,677.0 574.9,683.0 579.8,669.2 580.8,654.6" fill="#ff0000"/>
<line x1="556" y1="1055" x2="1018.8" y2="1155.4" stroke="#ff0000" stroke-width="6"/>
<polygon points="1054.0,1163.0 1011.8,1168.7 1016.9,1154.9 1018.0,1140.4" fill="#ff0000"/>
<line x1="703" y1="1325" x2="935.8" y2="1374.9" stroke="#ff0000" stroke-width="6"/>
<polygon points="971.0,1382.5 928.8,1388.3 933.8,1374.5 934.9,1359.9" fill="#ff0000"/>
<line x1="373" y1="1741" x2="581.7" y2="1784.3" stroke="#ff0000" stroke-width="6"/>
<polygon points="617.0,1791.6 574.9,1797.7 579.8,1783.9 580.8,1769.3" fill="#ff0000"/>
<line x1="613" y1="1631" x2="767.7" y2="1758.6" stroke="#ff0000" stroke-width="6"/>
<polygon points="795.5,1781.5 755.4,1767.2 766.2,1757.3 773.9,1744.9" fill="#ff0000"/>
<line x1="730.5" y1="1634.6" x2="846.3" y2="1692.0" stroke="#ff0000" stroke-width="6"/>
<polygon points="878.6,1708.0 836.3,1703.2 844.6,1691.1 849.2,1677.2" fill="#ff0000"/>
</svg></body></html>
